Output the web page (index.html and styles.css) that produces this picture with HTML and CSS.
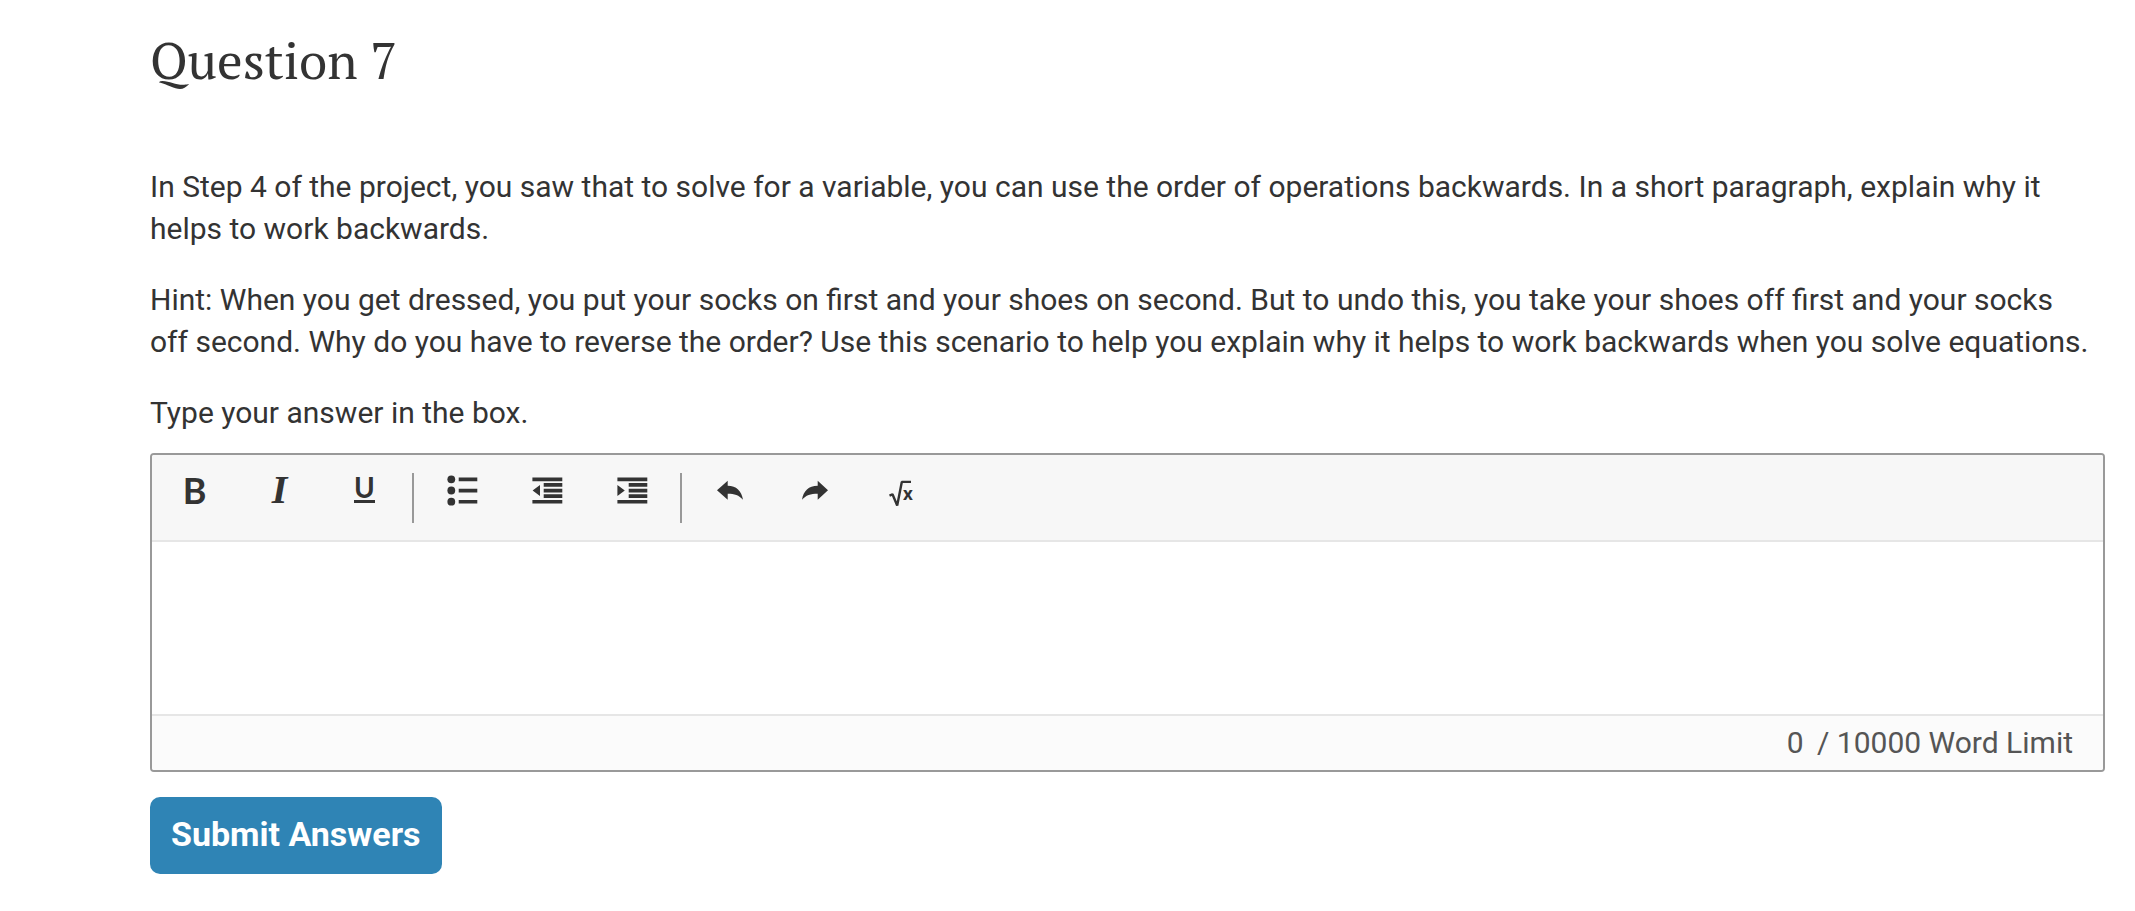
FILE: index.html
```html
<!DOCTYPE html>
<html lang="en">
<head>
<meta charset="UTF-8">
<meta name="viewport" content="width=device-width, initial-scale=1.0">
<title>Question 7</title>
<link rel="stylesheet" href="styles.css">
</head>
<body>
<main class="question">
    <h1>Question 7</h1>
    <p>In Step 4 of the project, you saw that to solve for a variable, you can use the order of operations backwards. In a short paragraph, explain why it helps to work backwards.</p>
    <p>Hint: When you get dressed, you put your socks on first and your shoes on second. But to undo this, you take your shoes off first and your socks off second. Why do you have to reverse the order? Use this scenario to help you explain why it helps to work backwards when you solve equations.</p>
    <form>
        <label class="prompt" for="answer">Type your answer in the box.</label>
        <div class="editor">
            <div class="toolbar" role="toolbar" aria-label="Formatting">
                <button type="button" class="tool" aria-label="Bold"><span class="bold">B</span></button>
                <button type="button" class="tool" aria-label="Italic"><span class="italic">I</span></button>
                <button type="button" class="tool" aria-label="Underline"><span class="underline">U</span></button>
                <span class="separator"></span>
                <button type="button" class="tool" aria-label="Bulleted list">
                    <svg viewBox="0 0 41 40">
                        <circle cx="9.3" cy="8.3" r="3.9"/>
                        <circle cx="9.3" cy="19.5" r="3.9"/>
                        <circle cx="9.3" cy="30.7" r="3.9"/>
                        <path d="M16.7 6.5h18.6v3.7H16.7zM16.7 17.7h18.6v3.7H16.7zM16.7 28.9h18.6v3.7H16.7z"/>
                    </svg>
                </button>
                <button type="button" class="tool" aria-label="Decrease indent">
                    <svg viewBox="0 0 41 40">
                        <path d="M5.4 6.5h29.9v3.7H5.4zM16.7 12.1h18.6v3.7H16.7zM16.7 17.7h18.6v3.7H16.7zM16.7 23.3h18.6V27H16.7zM5.4 28.9h29.9v3.7H5.4zM5.6 19.5l7.4-5.6v11.2z"/>
                    </svg>
                </button>
                <button type="button" class="tool" aria-label="Increase indent">
                    <svg viewBox="0 0 41 40">
                        <path d="M5.4 6.5h29.9v3.7H5.4zM16.7 12.1h18.6v3.7H16.7zM16.7 17.7h18.6v3.7H16.7zM16.7 23.3h18.6V27H16.7zM5.4 28.9h29.9v3.7H5.4zM12.8 19.5l-7.4-5.6v11.2z"/>
                    </svg>
                </button>
                <span class="separator"></span>
                <button type="button" class="tool" aria-label="Undo">
                    <svg viewBox="0 0 41 40">
                        <path d="M7 19.2L17.7 9.8v5C26.5 14.8 31.5 20 33 28.8C29 24.3 24.5 22.8 17.7 22.8v6z"/>
                    </svg>
                </button>
                <button type="button" class="tool" aria-label="Redo">
                    <svg viewBox="0 0 41 40">
                        <path d="M33 19.2L22.7 9.8v5C13.5 14.8 8.5 20 7 28.8C11 24.3 15.5 22.8 22.7 22.8v6z"/>
                    </svg>
                </button>
                <button type="button" class="tool" aria-label="Insert equation">
                    <svg viewBox="0 0 41 40">
                        <path class="radical" d="M9.5 24.6l3-1.3L17.2 34.5L21.8 10.9H31"/>
                        <text x="23" y="29">x</text>
                    </svg>
                </button>
            </div>
            <textarea id="answer"></textarea>
            <div class="word-count"><span class="count">0</span> / 10000 Word Limit</div>
        </div>
        <button type="submit" class="submit">Submit Answers</button>
    </form>
</main>
</body>
</html>
```
FILE: styles.css
```css
body {
    margin: 0;
    background-color: #fff;
    color: #333;
    font-family: Roboto, sans-serif;
    font-size: 30px;
    line-height: 42px;
}
.question {
    padding: 28px 30px 36px 150px;
}
h1 {
    margin: 0 0 74px;
    font-family: "PT Serif", "Liberation Serif", serif;
    font-size: 51px;
    font-weight: 400;
    line-height: 64px;
}
p {
    margin: 0 10px 29px 0;
}
.prompt {
    display: block;
    margin-bottom: 19px;
}
.editor {
    border: 2px solid #999;
    border-radius: 4px;
    overflow: hidden;
}
.toolbar {
    display: flex;
    height: 85px;
    background-color: #f7f7f7;
    border-bottom: 2px solid #e6e6e6;
}
.tool {
    display: flex;
    justify-content: center;
    align-items: flex-start;
    width: 85px;
    padding: 16px 0;
    border: none;
    background: none;
    color: #333;
    cursor: pointer;
}
.tool:hover {
    background-color: #e6e6e6;
}
.tool svg {
    width: 41px;
    height: 40px;
    fill: #333;
}
.tool .radical {
    fill: none;
    stroke: #333;
    stroke-width: 2.4;
    stroke-linejoin: bevel;
}
.tool text {
    font-family: "Open Sans", sans-serif;
    font-size: 17px;
    font-weight: 700;
}
.bold {
    font-family: Lato, sans-serif;
    font-size: 36px;
    font-weight: 700;
    line-height: 38px;
}
.italic {
    font-family: "Liberation Serif", serif;
    font-size: 40px;
    font-style: italic;
    font-weight: 700;
    line-height: 38px;
}
.underline {
    height: 24px;
    margin-top: 5px;
    border-bottom: 3px solid #333;
    font-family: Lato, sans-serif;
    font-size: 28px;
    font-weight: 700;
    line-height: 22px;
}
.separator {
    width: 2px;
    height: 50px;
    margin: 18px 6px 0 5px;
    background-color: #999;
}
textarea {
    display: block;
    box-sizing: border-box;
    width: 100%;
    height: 172px;
    padding: 16px 30px;
    border: none;
    outline: none;
    resize: none;
    background-color: #fff;
    color: #333;
    font: inherit;
}
.word-count {
    padding: 6px 30px;
    background-color: #fbfbfb;
    border-top: 2px solid #e6e6e6;
    color: #555;
    text-align: right;
}
.count {
    margin-right: 6px;
}
.submit {
    margin-top: 25px;
    padding: 16px 21px 18px;
    border: none;
    border-radius: 10px;
    background-color: #2f84b5;
    color: #fff;
    font-family: Roboto, sans-serif;
    font-size: 34px;
    font-weight: 700;
    line-height: 43px;
    cursor: pointer;
}
.submit:hover {
    background-color: #266d96;
}
```
